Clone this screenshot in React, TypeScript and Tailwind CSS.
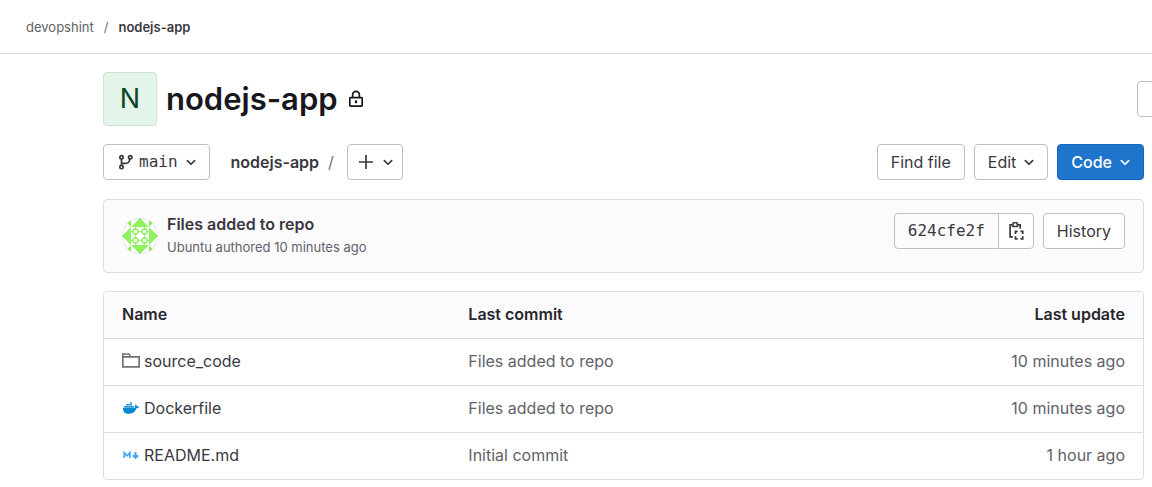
import type { ReactNode } from "react";
import { SiDocker } from "react-icons/si";
import { clsx } from "clsx";

type FileRow = {
  name: string;
  icon: ReactNode;
  commit: string;
  updated: string;
};

function Icon({ children, className }: { children: ReactNode; className?: string }) {
  return (
    <svg
      viewBox="0 0 16 16"
      fill="none"
      stroke="currentColor"
      strokeWidth="1.5"
      className={clsx("h-[18px] w-[18px] shrink-0", className)}
      aria-hidden="true"
    >
      {children}
    </svg>
  );
}

function ChevronDown() {
  return (
    <Icon>
      <path d="M4.75 6.75 8 10l3.25-3.25" strokeLinecap="round" strokeLinejoin="round" />
    </Icon>
  );
}

function BranchIcon() {
  return (
    <Icon>
      <circle cx="4" cy="3.75" r="1.5" />
      <circle cx="4" cy="12.5" r="1.5" />
      <circle cx="11.75" cy="3.75" r="1.5" />
      <path d="M4 5.25V11M4 9.25h3.75A3.5 3.5 0 0 0 11.25 5.75V5.25" />
    </Icon>
  );
}

function LockIcon() {
  return (
    <Icon className="text-[#18171d]">
      <path d="M5 7V4.25a3 3 0 0 1 6 0V7" />
      <rect x="2.5" y="6.75" width="11" height="7.5" rx="0.5" />
      <path d="M8 9.25v2.5" strokeWidth="2" />
    </Icon>
  );
}

function CopyIcon() {
  return (
    <Icon>
      <path d="M5 2.5H2.75v10.75h2.5M9.5 2.5h2.25V6" />
      <path d="M5.25 4V2.25a2 2 0 0 1 4 0V4z" />
      <path d="M7.5 10.75v-2.5H9.5M12 8.25h2v2.5M14 12.75V15h-2M9.5 15h-2v-2.25" />
    </Icon>
  );
}

function FolderIcon() {
  return (
    <Icon className="text-[#737278]">
      <path d="M.75 13.25V1.75h5.5l1.25 2.5h7.75v9z" />
      <path d="M.75 4.25H7.5" />
    </Icon>
  );
}

function MarkdownIcon() {
  return (
    <Icon className="text-[#42a5f5]">
      <path d="M2 10.75V6l2.5 2.75L7 6v4.75" />
      <path d="M12 5.25v4M9.75 8.25 12 10.5l2.25-2.25" strokeWidth="1.75" />
    </Icon>
  );
}

function Identicon() {
  return (
    <svg viewBox="0 0 36 36" className="h-9 w-9 shrink-0" role="img" aria-label="Ubuntu">
      <defs>
        <clipPath id="round">
          <circle cx="18" cy="18" r="18" />
        </clipPath>
      </defs>
      <g clipPath="url(#round)">
        <rect width="36" height="36" fill="#fff" />
        <g fill="#8df25d">
          <path d="M18 0l9 9H9zM18 36l9-9H9zM0 18l9-9v18zM36 18l-9-9v18z" />
          <path d="M0 0h9L9 9zM36 0h-9v9zM36 36h-9v-9zM0 36h9v-9z" />
          {[13.5, 22.5].map((x) =>
            [13.5, 22.5].map((y) => (
              <path
                key={`${x}-${y}`}
                fillRule="evenodd"
                d={`M${x} ${y - 4.5}l4.5 4.5-4.5 4.5-4.5-4.5zM${x - 1.6} ${y - 1.6}v3.2h3.2v-3.2z`}
              />
            ))
          )}
        </g>
      </g>
      <circle cx="18" cy="18" r="17.5" fill="none" stroke="#000" strokeOpacity="0.1" />
    </svg>
  );
}

function Button({
  children,
  className,
  primary,
  label,
}: {
  children?: ReactNode;
  className?: string;
  primary?: boolean;
  label?: string;
}) {
  return (
    <button
      type="button"
      aria-label={label}
      className={clsx(
        "flex h-9 shrink-0 items-center whitespace-nowrap rounded border",
        primary
          ? "border-[#1068bf] bg-[#1f75cb] font-medium text-white"
          : "border-[#bfbfc3] bg-white text-[#3a383f]",
        className
      )}
    >
      {children}
    </button>
  );
}

const files: FileRow[] = [
  {
    name: "source_code",
    icon: <FolderIcon />,
    commit: "Files added to repo",
    updated: "10 minutes ago",
  },
  {
    name: "Dockerfile",
    icon: <SiDocker className="h-[18px] w-[18px] shrink-0 p-px text-[#0288d1]" aria-hidden="true" />,
    commit: "Files added to repo",
    updated: "10 minutes ago",
  },
  {
    name: "README.md",
    icon: <MarkdownIcon />,
    commit: "Initial commit",
    updated: "1 hour ago",
  },
];

export default function App() {
  return (
    <div className="overflow-x-hidden bg-white font-['Inter',sans-serif] text-base leading-6 text-[#3a383f]">
      <nav
        aria-label="Breadcrumb"
        className="flex h-[54px] items-center gap-[10px] border-b border-[#dcdcde] px-[26px] text-[13px]"
      >
        <a href="#group" className="text-[#626168]">
          devopshint
        </a>
        <span className="text-[#737278]">/</span>
        <a href="#project" className="font-semibold">
          nodejs-app
        </a>
      </nav>

      <main className="pt-[18px] pr-2 pb-2 pl-[103px]">
        <header className="-mr-2 flex items-center">
          <div className="flex h-[54px] w-[54px] shrink-0 items-center justify-center rounded border border-[#cfe0d5] bg-[#e3f5e9] text-[27px] text-[#0e4328]">
            N
          </div>
          <h1 className="ml-[9px] text-[31px] leading-10 font-semibold text-[#18171d]">nodejs-app</h1>
          <span className="ml-[9px]">
            <LockIcon />
          </span>
          <Button label="Notifications" className="-mr-12 ml-auto w-[63px]" />
        </header>

        <div className="mt-[18px] flex items-center justify-between">
          <div className="flex items-center">
            <Button className="gap-1 pr-[9px] pl-[13px]">
              <BranchIcon />
              <span className="font-['DejaVu_Sans_Mono',monospace]">main</span>
              <ChevronDown />
            </Button>
            <a href="#root" className="ml-[21px] font-semibold">
              nodejs-app
            </a>
            <span className="mr-[13px] ml-[9px] text-[#737278]">/</span>
            <Button label="Add to tree" className="gap-1 pr-[5px] pl-[9px]">
              <Icon>
                <path d="M8 1.75v12.5M1.75 8h12.5" />
              </Icon>
              <ChevronDown />
            </Button>
          </div>
          <div className="flex gap-[9px]">
            <Button className="px-[13px]">Find file</Button>
            <Button className="gap-1 pr-[9px] pl-[13px]">
              Edit
              <ChevronDown />
            </Button>
            <Button primary className="gap-1 pr-[9px] pl-[13px]">
              Code
              <ChevronDown />
            </Button>
          </div>
        </div>

        <section className="mt-[19px] flex h-[74px] items-start rounded border border-[#dcdcde] bg-[#fbfafd] px-[18px] pt-[13px]">
          <div className="pt-[5px]">
            <Identicon />
          </div>
          <div className="ml-[9px]">
            <a href="#commit" className="block leading-[22px] font-semibold">
              Files added to repo
            </a>
            <p className="text-[13px] leading-6 text-[#626168]">Ubuntu authored 10 minutes ago</p>
          </div>
          <div className="ml-auto flex gap-[9px]">
            <div className="flex">
              <span className="flex h-9 items-center rounded-l border border-[#bfbfc3] px-[13px] font-['DejaVu_Sans_Mono',monospace]">
                624cfe2f
              </span>
              <Button label="Copy commit SHA" className="-ml-px rounded-l-none px-2">
                <CopyIcon />
              </Button>
            </div>
            <Button className="px-[13px]">History</Button>
          </div>
        </section>

        <div className="mt-[18px] overflow-hidden rounded border border-[#dcdcde]">
          <table className="w-full table-fixed border-collapse">
            <thead>
              <tr className="h-[46px] border-b border-[#dcdcde] bg-[#fbfafd] text-left text-[#28272d]">
                <th className="w-1/3 px-[18px] pb-0.5 font-semibold">Name</th>
                <th className="px-[18px] pb-0.5 font-semibold">Last commit</th>
                <th className="px-[18px] pb-0.5 text-right font-semibold">Last update</th>
              </tr>
            </thead>
            <tbody>
              {files.map((file) => (
                <tr
                  key={file.name}
                  className="h-[47px] border-b border-[#dcdcde] text-[#626168] last:border-b-0"
                >
                  <td className="px-[18px] pb-0.5">
                    <a href={`#${file.name}`} className="flex items-center gap-1 text-[#3a383f]">
                      {file.icon}
                      {file.name}
                    </a>
                  </td>
                  <td className="px-[18px] pb-0.5">{file.commit}</td>
                  <td className="px-[18px] pb-0.5 text-right">{file.updated}</td>
                </tr>
              ))}
            </tbody>
          </table>
        </div>
      </main>
    </div>
  );
}
